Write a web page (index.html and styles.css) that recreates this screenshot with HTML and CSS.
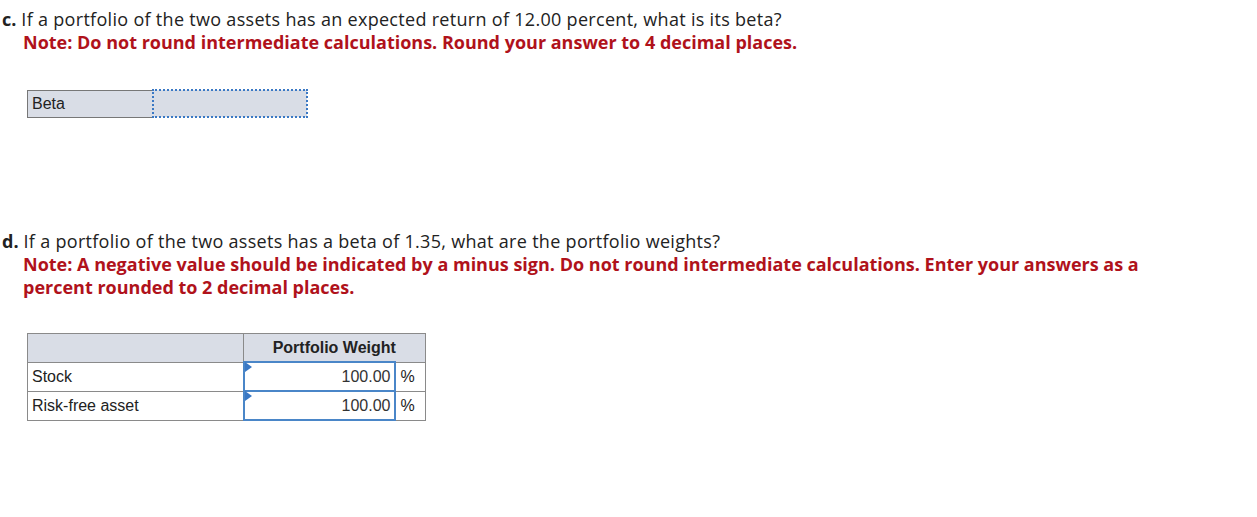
FILE: index.html
```html
<!DOCTYPE html>
<html>
<head>
<meta charset="utf-8">
<link rel="stylesheet" href="styles.css">
</head>
<body>
<div class="page">
  <section class="q q-c">
    <p class="question"><b>c.</b> If a portfolio of the two assets has an expected return of 12.00 percent, what is its beta?</p>
    <p class="note">Note: Do not round intermediate calculations. Round your answer to 4 decimal places.</p>
    <table class="tbl beta">
      <tr>
        <td class="label">Beta</td>
        <td class="input-dotted"></td>
      </tr>
    </table>
  </section>

  <section class="q q-d">
    <p class="question"><b>d.</b> If a portfolio of the two assets has a beta of 1.35, what are the portfolio weights?</p>
    <p class="note">Note: A negative value should be indicated by a minus sign. Do not round intermediate calculations. Enter your answers as a percent rounded to 2 decimal places.</p>
    <table class="tbl weights">
      <tr class="head">
        <th class="c1"></th>
        <th class="c2" colspan="2">Portfolio Weight</th>
      </tr>
      <tr>
        <td class="label">Stock</td>
        <td class="val"><span class="flag"></span>100.00</td>
        <td class="unit">%</td>
      </tr>
      <tr>
        <td class="label">Risk-free asset</td>
        <td class="val"><span class="flag"></span>100.00</td>
        <td class="unit">%</td>
      </tr>
    </table>
  </section>
</div>
</body>
</html>
```

FILE: styles.css
```css
html, body {
  margin: 0;
  padding: 0;
  background: #ffffff;
}
.page {
  padding: 8px 0 0 2px;
  font-family: "Open Sans", Lato, sans-serif;
  color: #222;
}
.question {
  margin: 0;
  font-size: 18px;
  line-height: 23px;
  letter-spacing: 0.3px;
}
.question b {
  font-weight: 700;
  letter-spacing: 0;
}
.note {
  margin: 0 0 0 21px;
  font-size: 18px;
  line-height: 23px;
  font-weight: 700;
  color: #b0121b;
  max-width: 1140px;
}
.tbl {
  border-collapse: collapse;
  font-family: "Liberation Sans", Arial, sans-serif;
  font-size: 16px;
  color: #222;
  margin-left: 25px;
}
.beta {
  margin-top: 35px;
}
.beta td {
  height: 25px;
  padding: 0;
  background: #d9dde6;
}
.beta .label {
  width: 120px;
  padding-left: 4px;
  border: 1px solid #777;
  border-right: none;
}
.beta .input-dotted {
  width: 152px;
  border: 2px dotted #3a78c4;
}
.q-d {
  margin-top: 112px;
}
.weights {
  margin-top: 34px;
}
.weights th, .weights td {
  border: 1px solid #8a8a8a;
  height: 27px;
  padding: 0;
}
.weights .head th {
  background: #d9dde6;
  font-weight: 700;
  font-size: 16px;
}
.weights .c1 {
  width: 215px;
}
.weights .label {
  padding-left: 4px;
  text-align: left;
}
.weights .val {
  position: relative;
  width: 146px;
  text-align: right;
  padding-right: 3px;
  border: 2px solid #4a86c8;
  color: #333;
}
.weights .flag {
  position: absolute;
  left: 0;
  top: 0;
  width: 0;
  height: 0;
  border-top: 5px solid transparent;
  border-bottom: 5px solid transparent;
  border-left: 7px solid #3a78c4;
  transform: translateY(-1px);
}
.weights .unit {
  width: 24px;
  padding-left: 5px;
  text-align: left;
  border-left: 1px solid #8a8a8a;
}
```
